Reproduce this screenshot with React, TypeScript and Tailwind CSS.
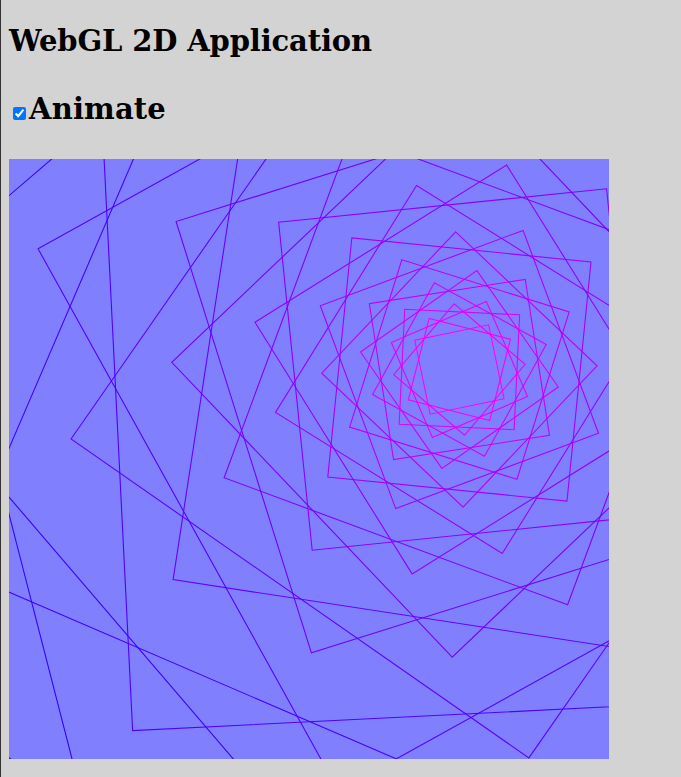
import React from 'react';

// squares spiral outwards from one point of the canvas
const CENTER_X = 450.4;
const CENTER_Y = 210.5;
const SQUARE_COUNT = 30;

function squarePoints(n: number) {
  const radius = 53.4 * Math.pow(1.111, n);
  const angle = ((33.2 + 26.14 * n) * Math.PI) / 180;
  const points = [];
  for (let i = 0; i < 4; i++) {
    const a = angle + (i * Math.PI) / 2;
    points.push(`${CENTER_X + radius * Math.cos(a)},${CENTER_Y + radius * Math.sin(a)}`);
  }
  return points.join(' ');
}

function squareColor(n: number) {
  const red = Math.max(0, Math.round(255 - n * 8.5));
  return `rgb(${red},0,255)`;
}

export default function App() {
  const squares = Array.from({ length: SQUARE_COUNT }, (_, n) => n);

  return (
    <div className="min-h-[777px] border-l border-[#333333] bg-[#d3d3d3] pl-2 text-black font-['DejaVu_Serif',serif]">
      <h2 className="pt-[21px] text-[29px] leading-[40px] font-bold tracking-[-0.15px]">WebGL 2D Application</h2>
      <h2 className="mt-[28px] mb-[30px] flex items-center text-[29px] leading-[40px] font-bold tracking-[0.15px]">
        <input type="checkbox" defaultChecked className="mt-2 mr-[3px] ml-1" />
        Animate
      </h2>
      <svg width={600} height={600} viewBox="0 0 600 600" className="block bg-[#8080ff]">
        {squares.map((n) => (
          <polygon key={n} points={squarePoints(n)} fill="none" stroke={squareColor(n)} strokeWidth={1.1} />
        ))}
      </svg>
    </div>
  );
}
